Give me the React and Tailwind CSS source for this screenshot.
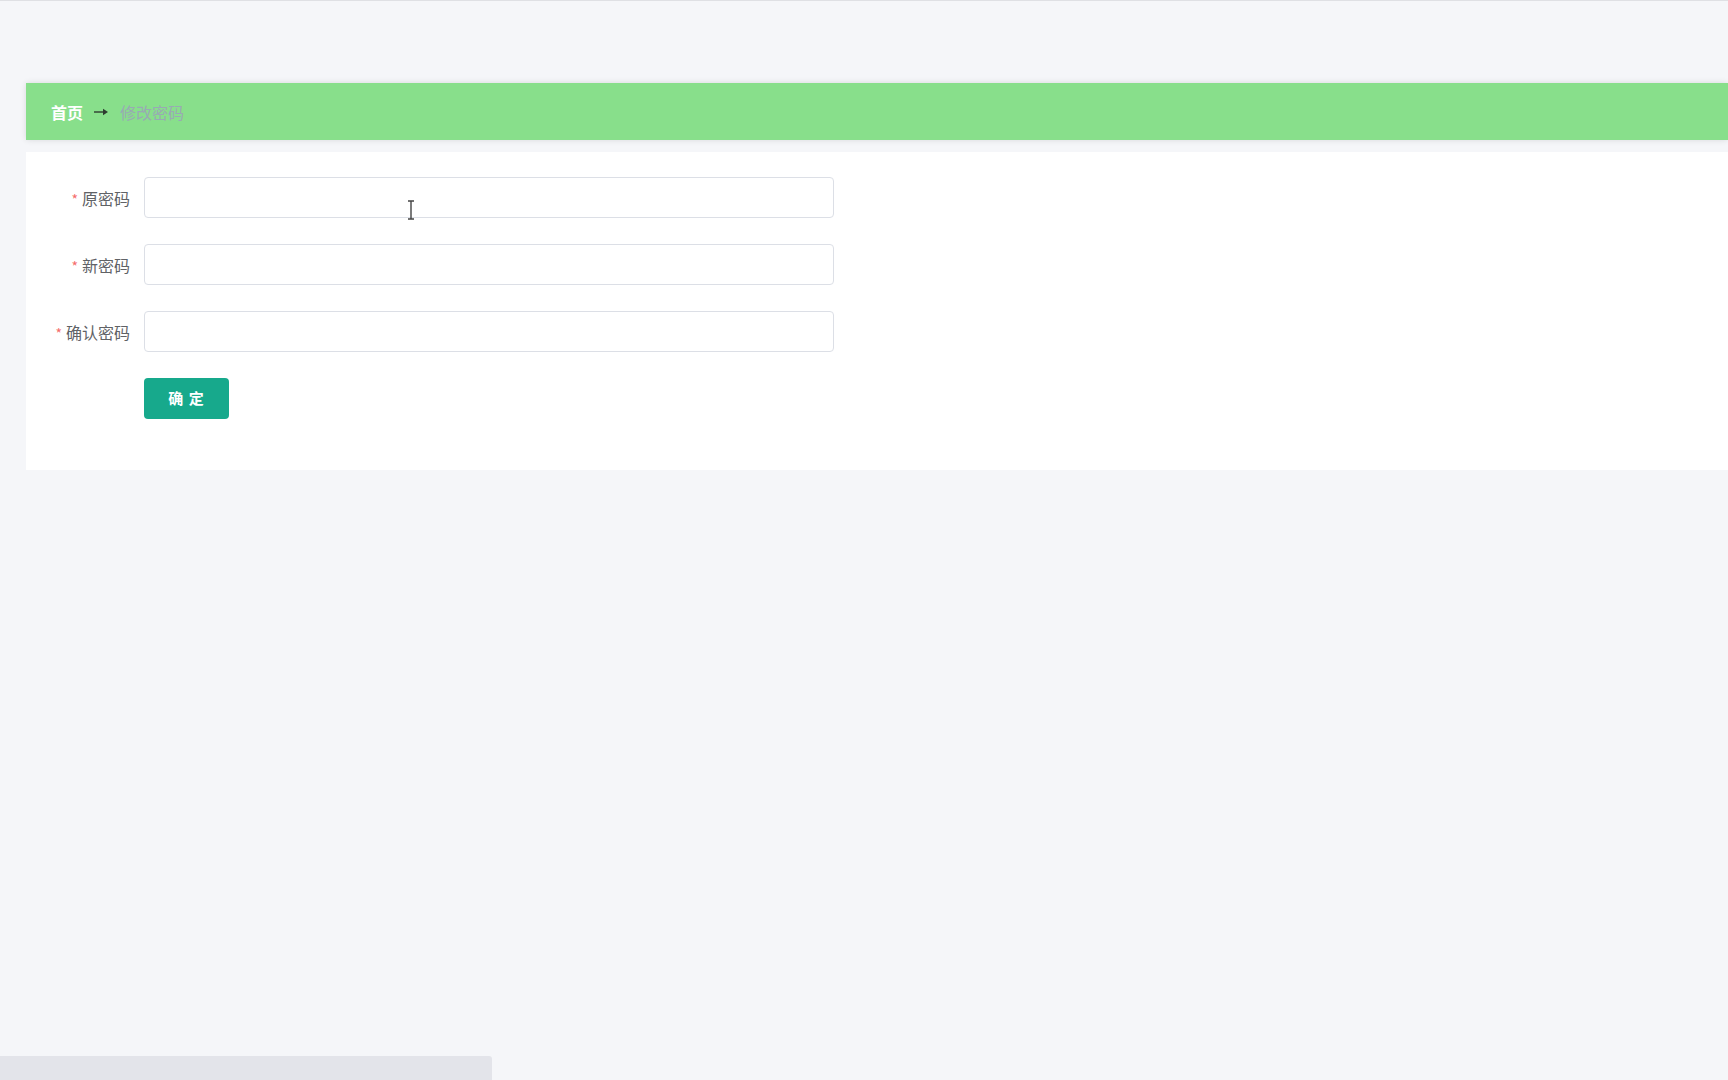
import React from "react";

function Row({ label, required = true }) {
  return (
    <div className="flex items-center h-[41px]">
      <label className="w-[118px] pr-[14px] text-right text-[16px] leading-none text-[#606266] whitespace-nowrap">
        {required && <span className="text-[#f56c6c] mr-[4px] text-[14px]">*</span>}
        {label}
      </label>
      <input
        type="password"
        className="w-[690px] h-[41px] border border-[#dcdfe6] rounded-[4px] bg-white outline-none px-[15px]"
      />
    </div>
  );
}

export default function App() {
  return (
    <div
      className="relative min-h-screen w-full overflow-hidden bg-[#f5f6f9] border-t border-[#dfe0e4]"
      style={{ fontFamily: '"Noto Sans CJK SC", "Noto Sans", sans-serif' }}
    >
      <div className="pl-[26px] pt-[82px]">
        <div className="h-[57px] bg-[#88df8b] shadow-[0_0_6px_rgba(0,0,0,0.12)] flex items-center pl-[25px] text-[16px]">
          <span className="text-white font-bold">首页</span>
          <svg className="ml-[11px]" width="15" height="10" viewBox="0 0 15 10">
            <path d="M0 5 H12" stroke="#2e3b30" strokeWidth="1.4" />
            <path d="M9 1.8 L14 5 L9 8.2 Z" fill="#2e3b30" />
          </svg>
          <span className="ml-[11px] text-[#98aab4]">修改密码</span>
        </div>
        <div className="mt-[12px] bg-white pt-[25px] pb-[51px] flex flex-col gap-[26px]">
          <Row label="原密码" />
          <Row label="新密码" />
          <Row label="确认密码" />
          <div className="flex">
            <div className="w-[118px]" />
            <button className="w-[85px] h-[41px] rounded-[4px] bg-[#17a98c] text-white text-[15px] font-bold tracking-[1px]">
              确 定
            </button>
          </div>
        </div>
      </div>
      <svg className="absolute left-[406px] top-[199px]" width="10" height="20" viewBox="0 0 10 20">
        <path d="M2 1 H8 M5 1 V19 M2 19 H8" stroke="#444" strokeWidth="1.4" fill="none" />
      </svg>
      <div className="absolute bottom-0 left-0 w-[492px] h-[24px] bg-[#e3e4ea] rounded-tr-[3px]" />
    </div>
  );
}
